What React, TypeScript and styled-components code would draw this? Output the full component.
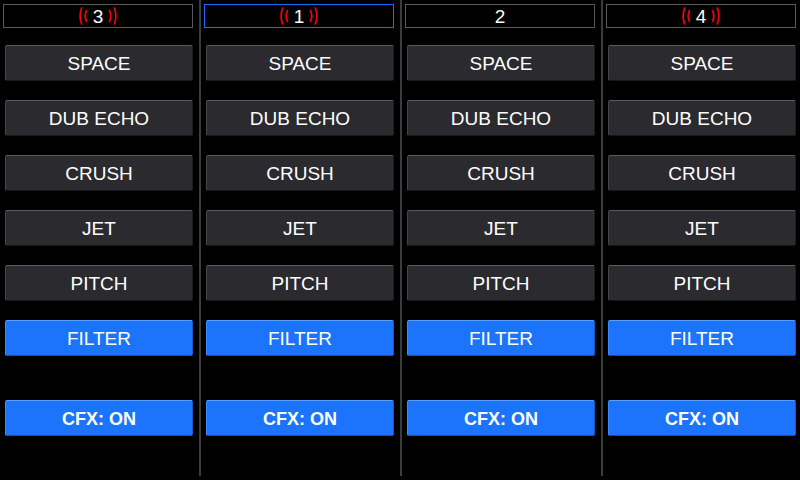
import React from 'react';
import styled, { createGlobalStyle } from 'styled-components';

const GlobalStyle = createGlobalStyle`
  html, body {
    margin: 0;
    padding: 0;
    background: #000000;
  }
  body {
    font-family: "Liberation Sans", Arial, sans-serif;
  }
`;

type Deck = { label: string; active?: boolean; wave?: boolean };

const decks: Deck[] = [
  { label: '3', wave: true },
  { label: '1', active: true, wave: true },
  { label: '2' },
  { label: '4', wave: true },
];

const effects = ['SPACE', 'DUB ECHO', 'CRUSH', 'JET', 'PITCH', 'FILTER'];

// red "on air" arcs either side of the deck number
const Wave = ({ flip }: { flip?: boolean }) => (
  <svg width="11" height="18" viewBox="0 0 11 18" style={flip ? { transform: 'scaleX(-1)' } : undefined}>
    <path d="M3.6 1.2 Q0.6 9 3.6 16.8" fill="none" stroke="#e8060c" strokeWidth="1.8" strokeLinecap="round" />
    <path d="M8.4 3.8 Q5.9 9 8.4 14.2" fill="none" stroke="#e8060c" strokeWidth="1.8" strokeLinecap="round" />
  </svg>
);

export default function App() {
  return (
    <>
      <GlobalStyle />
      <Screen>
        {decks.map((deck, i) => (
          <React.Fragment key={deck.label}>
            {i > 0 && <Divider />}
            <Column>
              <Header $active={deck.active}>
                {deck.wave && <Wave />}
                <DeckNumber>{deck.label}</DeckNumber>
                {deck.wave && <Wave flip />}
              </Header>
              <ButtonList>
                {effects.map((fx) => (
                  <FxButton key={fx} $on={fx === 'FILTER'}>
                    {fx}
                  </FxButton>
                ))}
              </ButtonList>
              <CfxButton $on>CFX: ON</CfxButton>
            </Column>
          </React.Fragment>
        ))}
      </Screen>
    </>
  );
}

const Screen = styled.div`
  display: flex;
  width: 800px;
  height: 480px;
  background: #000000;
  overflow: hidden;
`;

const Divider = styled.div`
  width: 2px;
  height: 476px;
  background: #3c3c3c;
  flex-shrink: 0;
`;

const Column = styled.div`
  width: 199px;
  flex-shrink: 0;
  display: flex;
  flex-direction: column;
  padding: 4px 6px 0 3px;
  box-sizing: border-box;
`;

const Header = styled.div<{ $active?: boolean }>`
  height: 24px;
  width: 190px;
  box-sizing: border-box;
  border: 1px solid ${(p) => (p.$active ? '#1a6cff' : '#5a5a5a')};
  background: #000000;
  display: flex;
  align-items: center;
  justify-content: center;
  gap: 1px;
`;

const DeckNumber = styled.span`
  color: #ffffff;
  font-size: 19px;
  line-height: 1;
  padding: 1px 3px 0;
`;

const ButtonList = styled.div`
  display: flex;
  flex-direction: column;
  gap: 19px;
  margin-top: 17px;
  padding-left: 2px;
`;

const FxButton = styled.div<{ $on?: boolean }>`
  height: 36px;
  width: 188px;
  box-sizing: border-box;
  border-radius: 2px;
  display: flex;
  align-items: center;
  justify-content: center;
  padding-top: 2px;
  font-size: 19px;
  color: #ffffff;
  background: ${(p) => (p.$on ? '#1c74fd' : '#2a2a2f')};
  border-top: 1px solid ${(p) => (p.$on ? '#5b9dff' : '#5c5c60')};
  border-left: 1px solid ${(p) => (p.$on ? '#3f88ff' : '#45454a')};
  border-right: 1px solid ${(p) => (p.$on ? '#1559c4' : '#1e1e22')};
  border-bottom: 1px solid ${(p) => (p.$on ? '#1250b0' : '#18181b')};
`;

const CfxButton = styled(FxButton)`
  margin-top: 44px;
  margin-left: 2px;
  font-weight: bold;
  font-size: 18px;
`;
